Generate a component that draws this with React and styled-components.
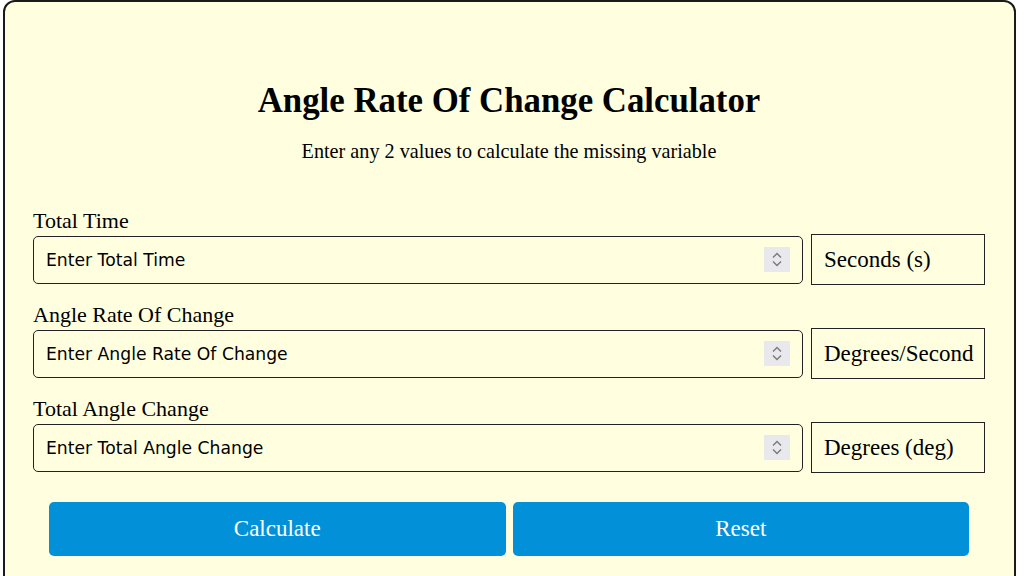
import styled, { createGlobalStyle } from "styled-components";

const GlobalStyle = createGlobalStyle`
  html, body {
    margin: 0;
    padding: 0;
    background: #ffffff;
  }
  body {
    font-family: "Liberation Serif", "Times New Roman", serif;
  }
`;

const fields = [
  { label: "Total Time", placeholder: "Enter Total Time", unit: "Seconds (s)" },
  { label: "Angle Rate Of Change", placeholder: "Enter Angle Rate Of Change", unit: "Degrees/Second" },
  { label: "Total Angle Change", placeholder: "Enter Total Angle Change", unit: "Degrees (deg)" },
];

const SpinIcon = () => (
  <svg width="26" height="25" viewBox="0 0 26 25">
    <polyline points="9,10.5 13,6.5 17,10.5" fill="none" stroke="#7a7a7a" strokeWidth="1.4" />
    <polyline points="9,14.5 13,18.5 17,14.5" fill="none" stroke="#7a7a7a" strokeWidth="1.4" />
  </svg>
);

const App = () => {
  return (
    <>
      <GlobalStyle />
      <Card>
        <Title>Angle Rate Of Change Calculator</Title>
        <Subtitle>Enter any 2 values to calculate the missing variable</Subtitle>
        <Form>
          {fields.map((f) => (
            <Field key={f.label}>
              <Label>{f.label}</Label>
              <Row>
                <InputBox>
                  <Input type="text" placeholder={f.placeholder} />
                  <Spinner>
                    <SpinIcon />
                  </Spinner>
                </InputBox>
                <UnitBox>{f.unit}</UnitBox>
              </Row>
            </Field>
          ))}
        </Form>
        <Buttons>
          <Button>Calculate</Button>
          <Button>Reset</Button>
        </Buttons>
      </Card>
    </>
  );
};

const Card = styled.div`
  box-sizing: border-box;
  width: 1013px;
  margin: 0 0 0 3px;
  padding: 79px 29px 40px 28px;
  background: #ffffe0;
  border: 2px solid #1a1a1a;
  border-radius: 12px;
  color: #000;
`;

const Title = styled.h1`
  margin: 0;
  text-align: center;
  font-size: 34.8px;
  font-weight: bold;
`;

const Subtitle = styled.p`
  margin: 19px 0 0;
  text-align: center;
  font-size: 20.2px;
`;

const Form = styled.div`
  display: flex;
  flex-direction: column;
  gap: 17px;
  margin-top: 45px;
`;

const Field = styled.div`
  display: flex;
  flex-direction: column;
`;

const Label = styled.label`
  font-size: 22px;
  line-height: 25px;
  margin-bottom: 1px;
`;

const Row = styled.div`
  display: flex;
  align-items: center;
  gap: 8px;
`;

const InputBox = styled.div`
  box-sizing: border-box;
  flex: 1;
  height: 48px;
  display: flex;
  align-items: center;
  padding: 0 12px;
  border: 1px solid #222;
  border-radius: 5px;
`;

const Input = styled.input`
  flex: 1;
  min-width: 0;
  border: none;
  outline: none;
  background: transparent;
  padding: 0;
  font-family: "DejaVu Sans", Verdana, sans-serif;
  font-size: 17.2px;
  color: #000;
  &::placeholder {
    color: #000;
  }
`;

const Spinner = styled.div`
  width: 26px;
  height: 25px;
  background: #e9e9ed;
  display: flex;
`;

const UnitBox = styled.div`
  box-sizing: border-box;
  width: 174px;
  height: 51px;
  display: flex;
  align-items: center;
  padding: 0 12px;
  border: 1px solid #222;
  font-size: 23px;
  white-space: nowrap;
  overflow: hidden;
`;

const Buttons = styled.div`
  display: grid;
  grid-template-columns: 1fr 1fr;
  gap: 7px;
  margin-top: 29px;
  padding: 0 16px;
`;

const Button = styled.button`
  height: 54px;
  border: none;
  border-radius: 5px;
  background: #0291d8;
  color: #fff;
  font-family: "Liberation Serif", "Times New Roman", serif;
  font-size: 23px;
  cursor: pointer;
`;

export default App;
